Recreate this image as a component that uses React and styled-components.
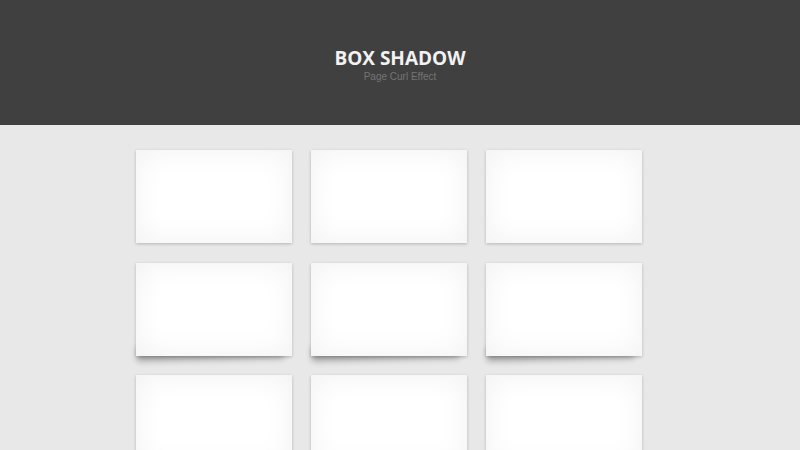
import React from "react";
import styled, { createGlobalStyle, css } from "styled-components";

const Global = createGlobalStyle`
  html, body { margin: 0; padding: 0; }
  body {
    background: #e8e8e8;
    font-family: "Open Sans", "Liberation Sans", sans-serif;
    overflow: hidden;
  }
`;

const Header = styled.header`
  height: 125px;
  background: #404040;
  display: flex;
  flex-direction: column;
  align-items: center;
  justify-content: flex-start;
  padding-top: 45px;
  box-sizing: border-box;
`;

const Title = styled.h1`
  margin: 0;
  font-family: "Open Sans", sans-serif;
  font-weight: 700;
  font-size: 19px;
  line-height: 26px;
  color: #f2f2f2;
`;

const Subtitle = styled.p`
  margin: 0;
  font-family: "Liberation Sans", Arial, sans-serif;
  font-size: 10px;
  line-height: 12px;
  color: #757575;
`;

const Grid = styled.main`
  width: 528px;
  margin: 0 auto;
  padding-top: 25px;
  display: flex;
  flex-wrap: wrap;
  row-gap: 19.5px;
`;

/* lifted lower-left corner: a rotated strip whose shadow peeks out below */
const curl = css`
  &::before {
    content: "";
    position: absolute;
    z-index: -1;
    left: 1px;
    bottom: 5px;
    width: 94%;
    height: 14px;
    box-shadow: 0 7px 6px rgba(0, 0, 0, 0.32);
    transform: rotate(-1.2deg);
    transform-origin: right bottom;
  }
`;

const Box = styled.div`
  position: relative;
  width: 156px;
  height: 93px;
  margin-right: 19px;
  background: #fff;
  box-shadow: 0 1px 3px rgba(0, 0, 0, 0.22), inset 0 0 30px rgba(0, 0, 0, 0.06);
  ${(p) => p.$curl && curl}
`;

const Layer = styled.div`
  position: relative;
  z-index: 0;
`;

const rows = [false, true, false];

export default function App() {
  return (
    <>
      <Global />
      <Header>
        <Title>BOX SHADOW</Title>
        <Subtitle>Page Curl Effect</Subtitle>
      </Header>
      <Layer>
        <Grid>
          {rows.map((c, r) =>
            [0, 1, 2].map((i) => <Box key={`${r}-${i}`} $curl={c} />)
          )}
        </Grid>
      </Layer>
    </>
  );
}
